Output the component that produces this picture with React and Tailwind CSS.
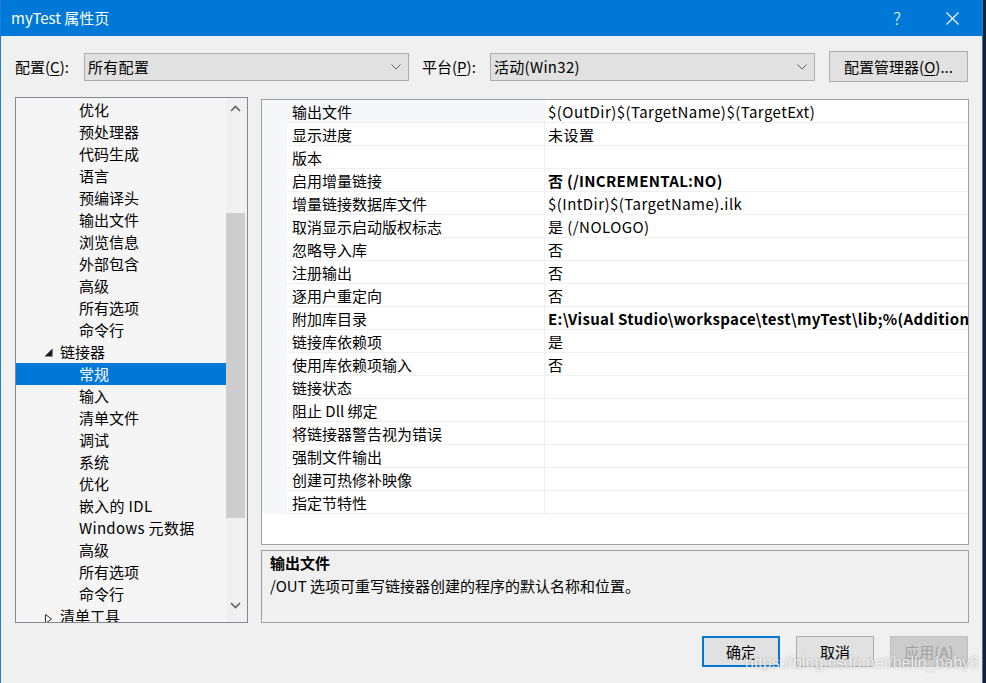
import React from 'react';

const FONT = "font-['Noto_Sans_CJK_SC','Noto_Sans',sans-serif]";

const tree = [
  { t: '优化', l: 2 },
  { t: '预处理器', l: 2 },
  { t: '代码生成', l: 2 },
  { t: '语言', l: 2 },
  { t: '预编译头', l: 2 },
  { t: '输出文件', l: 2 },
  { t: '浏览信息', l: 2 },
  { t: '外部包含', l: 2 },
  { t: '高级', l: 2 },
  { t: '所有选项', l: 2 },
  { t: '命令行', l: 2 },
  { t: '链接器', l: 1, exp: true },
  { t: '常规', l: 2, sel: true },
  { t: '输入', l: 2 },
  { t: '清单文件', l: 2 },
  { t: '调试', l: 2 },
  { t: '系统', l: 2 },
  { t: '优化', l: 2 },
  { t: '嵌入的 IDL', l: 2 },
  { t: 'Windows 元数据', l: 2 },
  { t: '高级', l: 2 },
  { t: '所有选项', l: 2 },
  { t: '命令行', l: 2 },
  { t: '清单工具', l: 1, col: true },
];

const props = [
  ['输出文件', '$(OutDir)$(TargetName)$(TargetExt)'],
  ['显示进度', '未设置'],
  ['版本', ''],
  ['启用增量链接', '否 (/INCREMENTAL:NO)', true],
  ['增量链接数据库文件', '$(IntDir)$(TargetName).ilk'],
  ['取消显示启动版权标志', '是 (/NOLOGO)'],
  ['忽略导入库', '否'],
  ['注册输出', '否'],
  ['逐用户重定向', '否'],
  ['附加库目录', 'E:\\Visual Studio\\workspace\\test\\myTest\\lib;%(AdditionalLibraryDirectories)', true],
  ['链接库依赖项', '是'],
  ['使用库依赖项输入', '否'],
  ['链接状态', ''],
  ['阻止 Dll 绑定', ''],
  ['将链接器警告视为错误', ''],
  ['强制文件输出', ''],
  ['创建可热修补映像', ''],
  ['指定节特性', ''],
];

function Chevron() {
  return (
    <svg width="10" height="6" viewBox="0 0 10 6" className="shrink-0">
      <polyline points="0.5,0.5 5,5 9.5,0.5" fill="none" stroke="#606060" strokeWidth="1" />
    </svg>
  );
}

function Combo({ text }) {
  return (
    <div className="w-[325px] h-[28px] bg-[#e1e1e1] border border-[#adadad] flex items-center pl-[3px] pr-[7px] text-[15px] text-black">
      <span className="flex-1 leading-[22px] tracking-[0.3px]">{text}</span>
      <Chevron />
    </div>
  );
}

function TreeRow({ item }) {
  const base = 'h-[22px] flex items-center text-[15px] leading-[22px] whitespace-nowrap';
  if (item.l === 1) {
    return (
      <div className={`${base} pl-[28px] text-black`}>
        <div className="w-[16px] h-[22px] flex items-center">
          {item.exp ? (
            <svg width="9" height="9" viewBox="0 0 9 9">
              <polygon points="8.5,0.5 8.5,8.5 0.5,8.5" fill="#1e1e1e" />
            </svg>
          ) : (
            <svg width="8" height="10" viewBox="0 0 8 10" className="ml-[1px] mt-[6px]">
              <polygon points="0.5,0.5 6.5,5 0.5,9.5" fill="none" stroke="#333" strokeWidth="1" />
            </svg>
          )}
        </div>
        <span>{item.t}</span>
      </div>
    );
  }
  return (
    <div className={`${base} pl-[63px] ${item.sel ? 'bg-[#0078d7] text-white' : 'text-black'}`}>
      <span className={/[A-Za-z]/.test(item.t) ? 'tracking-[0.3px]' : ''}>{item.t}</span>
    </div>
  );
}

function Button({ children, primary, disabled }) {
  let cls = 'w-[78px] h-[31px] flex items-center justify-center text-[15px] leading-[22px] ';
  if (primary) cls += 'bg-[#e1e1e1] border-2 border-[#0078d7] text-black';
  else if (disabled) cls += 'bg-[#cccccc] border border-[#bfbfbf] text-[#a0a0a0]';
  else cls += 'bg-[#e1e1e1] border border-[#adadad] text-black';
  return <div className={cls}>{children}</div>;
}

export default function App() {
  return (
    <div className={`w-[986px] h-[683px] bg-[#202020] overflow-hidden flex ${FONT}`}>
      <div className="relative w-[983px] h-[683px] flex flex-col bg-[#f0f0f0] border-x border-[#1a7fd6]">
        {/* Title bar */}
        <div className="h-[36px] bg-[#0078d7] flex items-center shrink-0 text-white">
          <span className="pl-[10px] text-[15px] leading-[20px] flex-1">myTest 属性页</span>
          <span className="w-[14px] text-center text-[17px] leading-[20px] font-light mr-[42px]">?</span>
          <svg width="13" height="13" viewBox="0 0 13 13" className="mr-[23px]">
            <line x1="0.5" y1="0.5" x2="12.5" y2="12.5" stroke="white" strokeWidth="1.1" />
            <line x1="12.5" y1="0.5" x2="0.5" y2="12.5" stroke="white" strokeWidth="1.1" />
          </svg>
        </div>

        {/* Config row */}
        <div className="flex items-center pl-[14px] pt-[15px] h-[46px] shrink-0 text-[15px] text-black">
          <div className="w-[69px] leading-[22px]">配置(<span className="underline underline-offset-2">C</span>):</div>
          <Combo text="所有配置" />
          <div className="ml-[13px] w-[68px] leading-[22px]">平台(<span className="underline underline-offset-2">P</span>):</div>
          <Combo text="活动(Win32)" />
          <div className="ml-[14px] w-[139px] h-[31px] bg-[#e1e1e1] border border-[#adadad] flex items-center justify-center leading-[22px]">
            配置管理器(<span className="underline underline-offset-2">O</span>)...
          </div>
        </div>

        {/* Main */}
        <div className="flex pl-[14px] mt-[15px] shrink-0">
          {/* Tree */}
          <div className="w-[233px] h-[526px] border border-[#828790] bg-[#f5f5f5] flex overflow-hidden">
            <div className="w-[210px] pt-[1px] flex flex-col overflow-hidden">
              {tree.map((it, i) => (
                <TreeRow key={i} item={it} />
              ))}
            </div>
            <div className="w-[21px] bg-[#f0f0f0] flex flex-col">
              <div className="h-[20px] flex items-center justify-center pr-[2px]">
                <svg width="11" height="7" viewBox="0 0 11 7">
                  <polyline points="1,6 5.5,1.5 10,6" fill="none" stroke="#606060" strokeWidth="1.6" />
                </svg>
              </div>
              <div className="ml-0 mt-[95px] w-[19px] h-[305px] bg-[#cdcdcd]" />
              <div className="flex-1" />
              <div className="h-[26px] flex items-start justify-center pr-[2px] pt-[6px]">
                <svg width="11" height="7" viewBox="0 0 11 7">
                  <polyline points="1,1 5.5,5.5 10,1" fill="none" stroke="#606060" strokeWidth="1.6" />
                </svg>
              </div>
            </div>
          </div>

          {/* Right column */}
          <div className="ml-[13px] w-[708px] mt-[2px] flex flex-col">
            <div className="h-[446px] border border-[#a0a0a0] bg-white overflow-hidden">
              {props.map(([n, v, b], i) => (
                <div key={i} className="flex h-[23px] text-[15px] leading-[22px] text-black">
                  <div className="w-[25px] shrink-0 bg-[#f5f7fb]" />
                  <div className={`w-[258px] shrink-0 pl-[5px] pt-[1px] border-b border-r border-[#f0f0f0] whitespace-nowrap ${i === 0 ? 'bg-[#f5f7fb]' : ''}`}>
                    {n}
                  </div>
                  <div className={`flex-1 min-w-0 pl-[3px] pt-[1px] border-b border-[#f0f0f0] whitespace-nowrap overflow-hidden ${b ? 'font-bold tracking-[0.3px]' : 'tracking-[0.45px]'}`}>
                    {v}
                  </div>
                </div>
              ))}
            </div>
            <div className="mt-[5px] h-[73px] border border-[#a0a0a0] bg-[#f0f0f0] pl-[8px] pt-[1px] text-[15px] leading-[22px] text-black">
              <div className="font-bold">输出文件</div>
              <div className="mt-[1px]">/OUT 选项可重写链接器创建的程序的默认名称和位置。</div>
            </div>
          </div>
        </div>

        {/* Buttons */}
        <div className="flex justify-end gap-4 pr-[14px] mt-[13px]">
          <Button primary>确定</Button>
          <Button>取消</Button>
          <Button disabled>
            应用(<span className="underline underline-offset-2">A</span>)
          </Button>
        </div>

        {/* Watermark */}
        <div className="absolute left-[744px] top-[653px] text-[16px] leading-[20px] font-['Liberation_Sans',sans-serif] text-white/80 [text-shadow:0_0_2px_rgba(0,0,0,0.35)] pointer-events-none">
          https://blog.csdn.net/hello_baby6
        </div>
      </div>
    </div>
  );
}
